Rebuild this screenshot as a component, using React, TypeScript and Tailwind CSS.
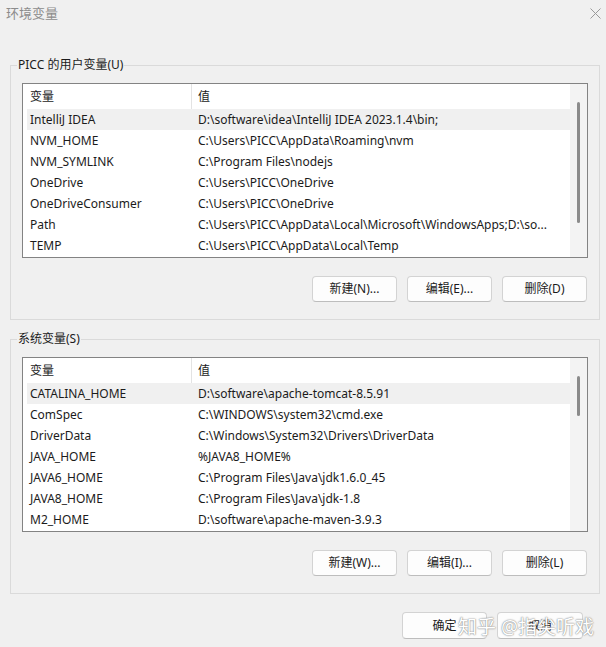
type Row = [string, string];

const userRows: Row[] = [
  ["IntelliJ IDEA", "D:\\software\\idea\\IntelliJ IDEA 2023.1.4\\bin;"],
  ["NVM_HOME", "C:\\Users\\PICC\\AppData\\Roaming\\nvm"],
  ["NVM_SYMLINK", "C:\\Program Files\\nodejs"],
  ["OneDrive", "C:\\Users\\PICC\\OneDrive"],
  ["OneDriveConsumer", "C:\\Users\\PICC\\OneDrive"],
  ["Path", "C:\\Users\\PICC\\AppData\\Local\\Microsoft\\WindowsApps;D:\\so..."],
  ["TEMP", "C:\\Users\\PICC\\AppData\\Local\\Temp"],
];

const systemRows: Row[] = [
  ["CATALINA_HOME", "D:\\software\\apache-tomcat-8.5.91"],
  ["ComSpec", "C:\\WINDOWS\\system32\\cmd.exe"],
  ["DriverData", "C:\\Windows\\System32\\Drivers\\DriverData"],
  ["JAVA_HOME", "%JAVA8_HOME%"],
  ["JAVA6_HOME", "C:\\Program Files\\Java\\jdk1.6.0_45"],
  ["JAVA8_HOME", "C:\\Program Files\\Java\\jdk-1.8"],
  ["M2_HOME", "D:\\software\\apache-maven-3.9.3"],
];

function Button({ label, className = "" }: { label: string; className?: string }) {
  return (
    <button
      className={`h-[26px] w-[85px] bg-[#fdfdfd] border border-[#d3d3d3] border-b-[#bdbdbd] rounded-[4px] text-[12px] text-[#1b1b1b] ${className}`}
    >
      {label}
    </button>
  );
}

function VarList({ rows, thumbTop, thumbHeight }: { rows: Row[]; thumbTop: string; thumbHeight: string }) {
  return (
    <div className="h-[175px] border border-[#838383] bg-white flex">
      <div className="flex-1 flex flex-col min-w-0">
        <div className="h-[25px] flex items-center shrink-0">
          <div className="w-[168px] pl-[7px]">变量</div>
          <div className="w-px h-full bg-[#e3e3e3]" />
          <div className="pl-[6px]">值</div>
        </div>
        {rows.map(([name, value], i) => (
          <div
            key={name}
            className={`h-[21px] ml-[4px] flex items-center shrink-0 ${i === 0 ? "bg-[#f0f0f0]" : ""}`}
          >
            <div className="w-[171px] pl-[3px] whitespace-nowrap">{name}</div>
            <div className="flex-1 whitespace-nowrap overflow-hidden">{value}</div>
          </div>
        ))}
      </div>
      <div className="w-[17px] bg-[#f3f3f3] flex justify-center">
        <div className={`w-[3px] rounded-full bg-[#8b8b8b] ${thumbTop} ${thumbHeight}`} />
      </div>
    </div>
  );
}

export default function App() {
  return (
    <div className="w-[606px] h-[647px] bg-[#f0f0f0] relative overflow-hidden text-[12px] text-[#1b1b1b] font-['Noto_Sans','Noto_Sans_CJK_SC',sans-serif]">
      {/* title bar */}
      <div className="h-[27px] flex items-center justify-between pl-[6px] pr-[5px]">
        <span className="text-[#8c8c8c] text-[13px]">环境变量</span>
        <svg width="11" height="11" viewBox="0 0 11 11" className="mb-[1px]">
          <path d="M0.5 0.5 L10.5 10.5 M10.5 0.5 L0.5 10.5" stroke="#9a9a9a" strokeWidth="1" />
        </svg>
      </div>

      {/* user variables */}
      <fieldset className="mt-[30px] mx-[10px] mr-[6px] border border-[#dadada] px-[11px] pb-[17px]">
        <legend className="-ml-[5px] px-[1px] leading-[16px]">PICC 的用户变量(U)</legend>
        <div className="pt-[10px]">
          <VarList rows={userRows} thumbTop="mt-[18px]" thumbHeight="h-[121px]" />
        </div>
        <div className="mt-[18px] flex justify-end gap-[10px] pr-[1px]">
          <Button label="新建(N)..." />
          <Button label="编辑(E)..." />
          <Button label="删除(D)" />
        </div>
      </fieldset>

      {/* system variables */}
      <fieldset className="mt-[11px] mx-[10px] mr-[6px] border border-[#dadada] px-[11px] pb-[17px]">
        <legend className="-ml-[5px] px-[1px] leading-[16px]">系统变量(S)</legend>
        <div className="pt-[10px]">
          <VarList rows={systemRows} thumbTop="mt-[18px]" thumbHeight="h-[40px]" />
        </div>
        <div className="mt-[18px] flex justify-end gap-[10px] pr-[1px]">
          <Button label="新建(W)..." />
          <Button label="编辑(I)..." />
          <Button label="删除(L)" />
        </div>
      </fieldset>

      {/* dialog buttons */}
      <div className="mt-[18px] flex justify-end gap-[10px] pr-[23px]">
        <Button label="确定" className="h-[27px]" />
        <Button label="取消" className="h-[27px] w-[86px]" />
      </div>

      {/* watermark */}
      <div className="absolute left-[458px] top-[613px] text-[19px] text-white [text-shadow:0_0_1px_#7a7a7a,0_0_2px_#9a9a9a] whitespace-nowrap pointer-events-none">
        知乎 @指尖听戏
      </div>
    </div>
  );
}
